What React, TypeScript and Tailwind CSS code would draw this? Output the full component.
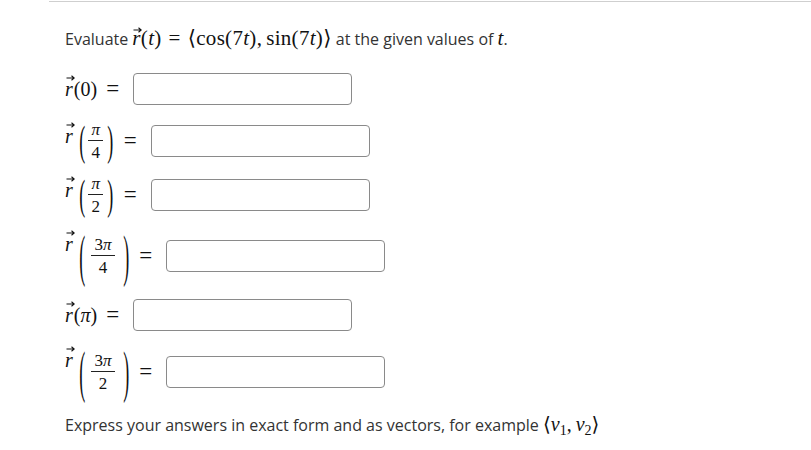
import React from 'react';

const serif = { fontFamily: '"Liberation Serif", "DejaVu Serif", serif' };

const VecR: React.FC<{ lift?: number }> = ({ lift = 0 }) => (
  <span
    className={`relative inline-block italic ${lift === 1 ? '-top-[5px]' : lift === 2 ? '-top-[12px]' : ''}`}
  >
    r
    <svg className="absolute left-[1px] top-[1px]" width="9" height="6" viewBox="0 0 9 6">
      <path d="M0.5 3 H8 M5.5 0.8 L8.2 3 L5.5 5.2" fill="none" stroke="currentColor" strokeWidth="1.1" />
    </svg>
  </span>
);

const I: React.FC<{ children: React.ReactNode }> = ({ children }) => (
  <span className="italic">{children}</span>
);

const Frac: React.FC<{ num: React.ReactNode; den: React.ReactNode }> = ({ num, den }) => (
  <span className="inline-flex flex-col items-center leading-none text-[17px]" style={serif}>
    <span className="px-[3px] pb-[2px]">{num}</span>
    <span className="w-full border-t border-[#222]" />
    <span className="px-[3px] pt-[3px]">{den}</span>
  </span>
);

const Paren: React.FC<{ ch: string; big?: boolean }> = ({ ch, big }) => (
  <span
    className={
      big
        ? 'inline-block text-[20px] leading-none scale-y-[2.9] scale-x-[0.9] translate-y-[-1px]'
        : 'inline-block text-[20px] leading-none scale-y-[2.1] scale-x-[0.9] translate-y-[-1px]'
    }
    style={serif}
  >
    {ch}
  </span>
);

const Eq = () => <span className="text-[23px] leading-none">=</span>;

const Row: React.FC<{ lhs: React.ReactNode; className: string; gap?: string }> = ({
  lhs,
  className,
  gap = 'ml-[9px]',
}) => (
  <div className={`flex items-center h-[32px] ${className}`}>
    <span className="flex items-center text-[20px] text-[#111]" style={serif}>
      {lhs}
      <span className={gap}>
        <Eq />
      </span>
    </span>
    <input
      type="text"
      className="ml-[14px] w-[219px] h-[32px] border border-[#8a8a8a] rounded-[4px] bg-white"
    />
  </div>
);

const fracArg = (num: React.ReactNode, den: React.ReactNode, big = false) => (
  <>
    <VecR lift={big ? 2 : 1} />
    <span className={big ? 'ml-[6px] mr-[6px]' : 'ml-[6px] mr-[3px]'}>
      <Paren ch="(" big={big} />
    </span>
    <Frac num={num} den={den} />
    <span className={big ? 'ml-[8px]' : 'ml-[4px]'}>
      <Paren ch=")" big={big} />
    </span>
  </>
);

export default function App() {
  return (
    <div
      className="w-[811px] h-[450px] bg-white text-[#333] overflow-hidden"
      style={{ fontFamily: '"Open Sans", "Noto Sans", sans-serif' }}
    >
      <div className="ml-[49px] mt-[1px] border-t border-[#cfcfcf]" />
      <div className="pl-[65px]">
        <p className="mt-[24px] text-[16px] leading-[24px] whitespace-nowrap">
          Evaluate{' '}
          <span className="text-[21px] text-[#111] tracking-[0.3px]" style={serif}>
            <VecR />
            (<I>t</I>)<span className="mx-[7px]">=</span>⟨cos(7<I>t</I>),<span className="ml-[4px]" />sin(7
            <I>t</I>)⟩
          </span>{' '}
          at the given values of{' '}
          <span className="text-[21px] text-[#111]" style={serif}>
            <I>t</I>
          </span>
          .
        </p>

        <Row
          className="mt-[22px]"
          lhs={
            <>
              <VecR />
              <span className="ml-[1px]">(0)</span>
            </>
          }
        />
        <Row className="mt-[20px]" gap="ml-[10px]" lhs={fracArg(<I>π</I>, '4')} />
        <Row className="mt-[22px]" gap="ml-[10px]" lhs={fracArg(<I>π</I>, '2')} />
        <Row
          className="mt-[29px]"
          gap="ml-[10px]"
          lhs={fracArg(
            <>
              3<I>π</I>
            </>,
            '4',
            true
          )}
        />
        <Row
          className="mt-[27px]"
          lhs={
            <>
              <VecR />
              <span className="ml-[1px]">
                (<I>π</I>)
              </span>
            </>
          }
        />
        <Row
          className="mt-[25px]"
          gap="ml-[10px]"
          lhs={fracArg(
            <>
              3<I>π</I>
            </>,
            '2',
            true
          )}
        />

        <p className="mt-[26px] text-[16px] leading-[20px] whitespace-nowrap">
          Express your answers in exact form and as vectors, for example{' '}
          <span className="text-[20px] text-[#111]" style={serif}>
            ⟨<I>v</I>
            <span className="text-[14px] relative top-[4px]">1</span>,<span className="ml-[4px]" />
            <I>v</I>
            <span className="text-[14px] relative top-[4px]">2</span>⟩
          </span>
        </p>
      </div>
    </div>
  );
}
